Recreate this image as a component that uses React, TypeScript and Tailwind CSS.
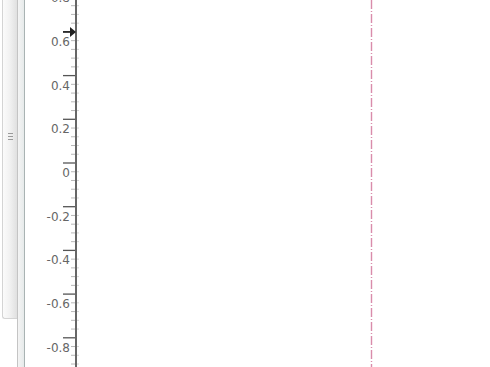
import { useMemo } from 'react';

// Posição vertical do zero e distância entre marcas maiores (0.2)
const ZERO_Y = 163;
const PASSO = 43.7;
const EIXO_X = 51; // relativo à área do gráfico (começa em x=25)

function Regua() {
  const marcas = useMemo(() => {
    const maiores: { y: number; rotulo: string }[] = [];
    const menores: number[] = [];
    for (let k = -5; k <= 5; k++) {
      const y = ZERO_Y - k * PASSO;
      const valor = k * 0.2;
      maiores.push({ y, rotulo: k === 0 ? '0' : valor.toFixed(1) });
      for (let m = 1; m < 5; m++) menores.push(y - (m * PASSO) / 5);
    }
    return { maiores, menores };
  }, []);

  return (
    <svg width="465" height="367" className="block">
      {marcas.menores.map((y, i) => (
        <g key={i}>
          <line x1={EIXO_X - 5} x2={EIXO_X} y1={y} y2={y} stroke="#b8b8b8" strokeWidth="1" />
          <line x1={EIXO_X} x2={EIXO_X + 3} y1={y} y2={y} stroke="#d6d6d6" strokeWidth="1" />
        </g>
      ))}
      {marcas.maiores.map((m) => (
        <g key={m.rotulo}>
          <line x1={EIXO_X - 13} x2={EIXO_X} y1={m.y} y2={m.y} stroke="#555" strokeWidth="1.3" />
          <text
            x={EIXO_X - 6}
            y={m.y + 14}
            textAnchor="end"
            fontSize="12"
            fill="#666"
            fontFamily="'DejaVu Sans', sans-serif"
          >
            {m.rotulo}
          </text>
        </g>
      ))}
      <line x1={EIXO_X} x2={EIXO_X} y1="0" y2="367" stroke="#666" strokeWidth="2" />
      {/* marcador em 0.6 */}
      <line x1={EIXO_X - 13} x2={EIXO_X - 3} y1={ZERO_Y - 3 * PASSO} y2={ZERO_Y - 3 * PASSO} stroke="#222" strokeWidth="1.6" />
      <path
        d={`M ${EIXO_X - 6} ${ZERO_Y - 3 * PASSO - 5} L ${EIXO_X} ${ZERO_Y - 3 * PASSO} L ${EIXO_X - 6} ${ZERO_Y - 3 * PASSO + 5} Z`}
        fill="#222"
      />
      <line
        x1="346.5"
        x2="346.5"
        y1="0"
        y2="367"
        stroke="#d98cab"
        strokeWidth="1.4"
        strokeDasharray="9 2 1 2"
      />
    </svg>
  );
}

export default function App() {
  return (
    <div className="flex h-[367px] w-[490px] overflow-hidden bg-white">
      <div className="flex w-[17px] shrink-0 flex-col">
        <div className="relative ml-[2px] h-[319px] rounded-bl-[3px] border-b border-l border-[#d4d4d4] bg-gradient-to-r from-[#fbfbfb] via-[#f1f1f1] to-[#e0e0e0]">
          <div className="absolute left-[5px] top-[133px] flex w-[5px] flex-col gap-[2px]">
            <div className="h-px bg-[#9a9a9a]" />
            <div className="h-px bg-[#9a9a9a]" />
            <div className="h-px bg-[#9a9a9a]" />
          </div>
        </div>
      </div>
      <div className="w-[8px] shrink-0 border-x border-l-[#c4c4c4] border-r-[#a9b3b3] bg-gradient-to-r from-[#f4f4f4] to-[#e6eaea]" />
      <div className="flex-1">
        <Regua />
      </div>
    </div>
  );
}
